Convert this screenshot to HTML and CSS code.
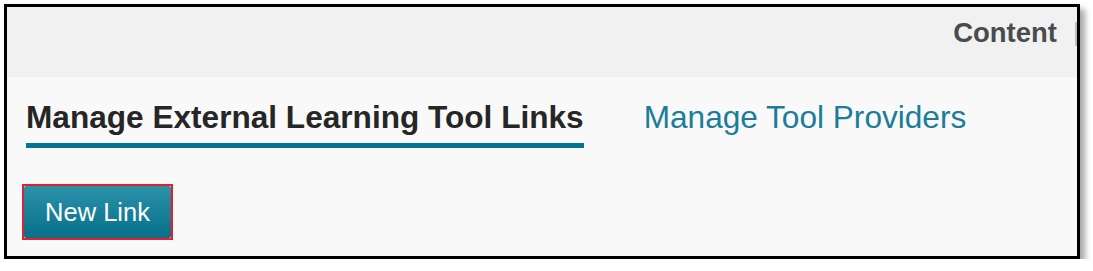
FILE: index.html
```html
<!DOCTYPE html>
<html lang="en">
<head>
<meta charset="utf-8">
<title>Manage External Learning Tool Links</title>
<link rel="stylesheet" href="styles.css">
</head>
<body>
<div class="frame">
  <header class="topbar">
    <span class="crumb">Content</span>
    <span class="sep"></span>
  </header>
  <main class="content">
    <nav class="tabs">
      <a class="tab active">Manage External Learning Tool Links</a>
      <a class="tab">Manage Tool Providers</a>
    </nav>
    <div class="actions">
      <span class="highlight"><button class="btn">New Link</button></span>
    </div>
  </main>
</div>
</body>
</html>
```

FILE: styles.css
```css
html, body {
  margin: 0;
  padding: 0;
  background: #ffffff;
}
body {
  font-family: "Liberation Sans", Arial, sans-serif;
  padding: 4px 0 0 4px;
}
.frame {
  width: 1076px;
  height: 255px;
  box-sizing: border-box;
  border: 3px solid #000;
  background: #f9f9f9;
  box-shadow: 5px 5px 6px rgba(0, 0, 0, 0.35);
  display: flex;
  flex-direction: column;
  overflow: hidden;
}
.topbar {
  height: 70px;
  flex: none;
  background: #f1f1f1;
  display: flex;
  justify-content: flex-end;
  align-items: flex-start;
  padding-top: 10px;
  box-sizing: border-box;
}
.crumb {
  font-size: 27.5px;
  line-height: 32px;
  font-weight: bold;
  color: #494c4e;
}
.sep {
  width: 2px;
  height: 24px;
  margin-top: 5px;
  margin-left: 18px;
  background: #bdbdbd;
}
.content {
  padding: 22px 0 0 19px;
}
.tabs {
  display: flex;
  align-items: flex-start;
  gap: 60px;
}
.tab {
  font-size: 31.6px;
  line-height: 36px;
  color: #1a7d99;
  padding-bottom: 8px;
  border-bottom: 5px solid transparent;
}
.tab.active {
  font-weight: bold;
  color: #262626;
  border-bottom-color: #047692;
}
.actions {
  margin-top: 36px;
  margin-left: -4px;
}
.highlight {
  display: inline-block;
  border: 2px solid #e5202e;
  line-height: 0;
}
.btn {
  width: 147px;
  height: 52px;
  border: none;
  border-radius: 2px;
  background: linear-gradient(#2c92aa, #066f89);
  color: #ffffff;
  font-family: "Liberation Sans", Arial, sans-serif;
  font-size: 25.5px;
  padding: 0;
  margin: 0;
}
```
